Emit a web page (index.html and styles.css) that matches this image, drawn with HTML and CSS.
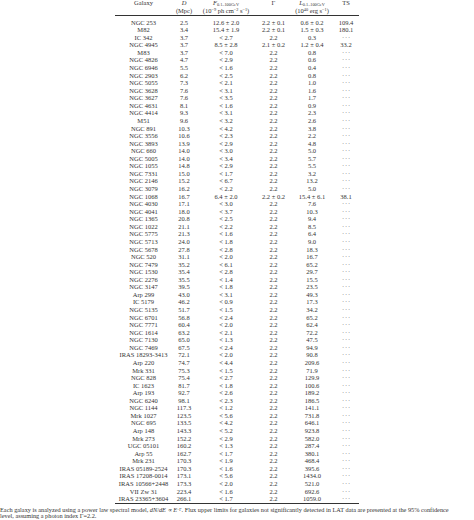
FILE: index.html
```html
<!DOCTYPE html>
<html>
<head>
<meta charset="utf-8">
<link rel="stylesheet" href="styles.css">
</head>
<body>
<div class="page">
  <div class="tbl">
    <div class="row head">
      <span>Galaxy</span><span><i>D</i></span><span><i>F</i><sub>0.1–100GeV</sub></span><span>Γ</span><span><i>L</i><sub>0.1–100GeV</sub></span><span>TS</span>
    </div>
    <div class="row head">
      <span></span><span>(Mpc)</span><span>(10<sup>−9</sup> ph cm<sup>−2</sup> s<sup>−1</sup>)</span><span></span><span>(10<sup>40</sup> erg s<sup>−1</sup>)</span><span></span>
    </div>
    <div class="rule"></div>
    <div class="body" id="body"></div>
    <div class="rule bottom"></div>
  </div>
  <p class="note">Each galaxy is analyzed using a power law spectral model, <i>dN</i>/<i>dE</i> ∝ <i>E</i><sup>−Γ</sup>. Flux upper limits for galaxies not significantly detected in LAT data are presented at the 95% confidence<br>level, assuming a photon index Γ=2.2.</p>
</div>
<script src="app.js"></script>
</body>
</html>
```
FILE: app.js
```js
const rows = [
["NGC 253","2.5","12.6 ± 2.0","2.2 ± 0.1","0.6 ± 0.2","109.4"],
["M82","3.4","15.4 ± 1.9","2.2 ± 0.1","1.5 ± 0.3","180.1"],
["IC 342","3.7","< 2.7","2.2","0.3",""],
["NGC 4945","3.7","8.5 ± 2.8","2.1 ± 0.2","1.2 ± 0.4","33.2"],
["M83","3.7","< 7.0","2.2","0.8",""],
["NGC 4826","4.7","< 2.9","2.2","0.6",""],
["NGC 6946","5.5","< 1.6","2.2","0.4",""],
["NGC 2903","6.2","< 2.5","2.2","0.8",""],
["NGC 5055","7.3","< 2.1","2.2","1.0",""],
["NGC 3628","7.6","< 3.1","2.2","1.6",""],
["NGC 3627","7.6","< 3.5","2.2","1.7",""],
["NGC 4631","8.1","< 1.6","2.2","0.9",""],
["NGC 4414","9.3","< 3.1","2.2","2.3",""],
["M51","9.6","< 3.2","2.2","2.6",""],
["NGC 891","10.3","< 4.2","2.2","3.8",""],
["NGC 3556","10.6","< 2.3","2.2","2.2",""],
["NGC 3893","13.9","< 2.9","2.2","4.8",""],
["NGC 660","14.0","< 3.0","2.2","5.0",""],
["NGC 5005","14.0","< 3.4","2.2","5.7",""],
["NGC 1055","14.8","< 2.9","2.2","5.5",""],
["NGC 7331","15.0","< 1.7","2.2","3.2",""],
["NGC 2146","15.2","< 6.7","2.2","13.2",""],
["NGC 3079","16.2","< 2.2","2.2","5.0",""],
["NGC 1068","16.7","6.4 ± 2.0","2.2 ± 0.2","15.4 ± 6.1","38.1"],
["NGC 4030","17.1","< 3.0","2.2","7.6",""],
["NGC 4041","18.0","< 3.7","2.2","10.3",""],
["NGC 1365","20.8","< 2.5","2.2","9.4",""],
["NGC 1022","21.1","< 2.2","2.2","8.5",""],
["NGC 5775","21.3","< 1.6","2.2","6.4",""],
["NGC 5713","24.0","< 1.8","2.2","9.0",""],
["NGC 5678","27.8","< 2.8","2.2","18.3",""],
["NGC 520","31.1","< 2.0","2.2","16.7",""],
["NGC 7479","35.2","< 6.1","2.2","65.2",""],
["NGC 1530","35.4","< 2.8","2.2","29.7",""],
["NGC 2276","35.5","< 1.4","2.2","15.5",""],
["NGC 3147","39.5","< 1.8","2.2","23.5",""],
["Arp 299","43.0","< 3.1","2.2","49.3",""],
["IC 5179","46.2","< 0.9","2.2","17.3",""],
["NGC 5135","51.7","< 1.5","2.2","34.2",""],
["NGC 6701","56.8","< 2.4","2.2","65.2",""],
["NGC 7771","60.4","< 2.0","2.2","62.4",""],
["NGC 1614","63.2","< 2.1","2.2","72.2",""],
["NGC 7130","65.0","< 1.3","2.2","47.5",""],
["NGC 7469","67.5","< 2.4","2.2","94.9",""],
["IRAS 18293-3413","72.1","< 2.0","2.2","90.8",""],
["Arp 220","74.7","< 4.4","2.2","209.6",""],
["Mrk 331","75.3","< 1.5","2.2","71.9",""],
["NGC 828","75.4","< 2.7","2.2","129.9",""],
["IC 1623","81.7","< 1.8","2.2","100.6",""],
["Arp 193","92.7","< 2.6","2.2","189.2",""],
["NGC 6240","98.1","< 2.3","2.2","186.5",""],
["NGC 1144","117.3","< 1.2","2.2","141.1",""],
["Mrk 1027","123.5","< 5.6","2.2","731.8",""],
["NGC 695","133.5","< 4.2","2.2","646.1",""],
["Arp 148","143.3","< 5.2","2.2","923.8",""],
["Mrk 273","152.2","< 2.9","2.2","582.0",""],
["UGC 05101","160.2","< 1.3","2.2","287.4",""],
["Arp 55","162.7","< 1.7","2.2","380.1",""],
["Mrk 231","170.3","< 1.9","2.2","468.4",""],
["IRAS 05189-2524","170.3","< 1.6","2.2","395.6",""],
["IRAS 17208-0014","173.1","< 5.6","2.2","1434.0",""],
["IRAS 10566+2448","173.3","< 2.0","2.2","521.0",""],
["VII Zw 31","223.4","< 1.6","2.2","692.6",""],
["IRAS 23365+3604","266.1","< 1.7","2.2","1059.0",""]
];
const body = document.getElementById("body");
for (const r of rows) {
  const row = document.createElement("div");
  row.className = "row";
  r.forEach((v, i) => {
    const s = document.createElement("span");
    if (i === 5 && v === "") { s.className = "dots"; s.textContent = "···"; }
    else s.textContent = v;
    row.appendChild(s);
  });
  body.appendChild(row);
}
```
FILE: styles.css
```css
html, body {
  margin: 0;
  padding: 0;
  background: #fff;
}
.page {
  width: 474px;
  height: 520px;
  overflow: hidden;
  font-family: "Liberation Serif", "Times New Roman", serif;
  color: #333;
}
.tbl {
  margin: -1px 0 0 115px;
  width: 244px;
}
.row {
  display: grid;
  grid-template-columns: 57px 24px 60px 35px 42px 26px;
  height: 7.57px;
  line-height: 7.57px;
  font-size: 6.5px;
  white-space: nowrap;
}
.row span {
  text-align: center;
  display: block;
}
.head {
  height: 7.7px;
  line-height: 7.7px;
}
.head sub, .head sup {
  font-size: 4.3px;
  line-height: 0;
}
.head sub {
  vertical-align: -1px;
}
.head sup {
  vertical-align: 2px;
}
.rule {
  height: 1.2px;
  background: #333;
  margin: 0.6px 0 2.5px;
}
.rule.bottom {
  margin: 0.2px 0 0;
}
.dots {
  letter-spacing: 0.8px;
  color: #555;
}
.body .row span:nth-child(6).dots {
  padding-left: 1px;
}
.note {
  margin: 3.3px 0 0;
  font-size: 6.3px;
  line-height: 6px;
  width: 474px;
  white-space: nowrap;
}
.note sup {
  font-size: 4px;
  line-height: 0;
  vertical-align: 1.5px;
}
```
